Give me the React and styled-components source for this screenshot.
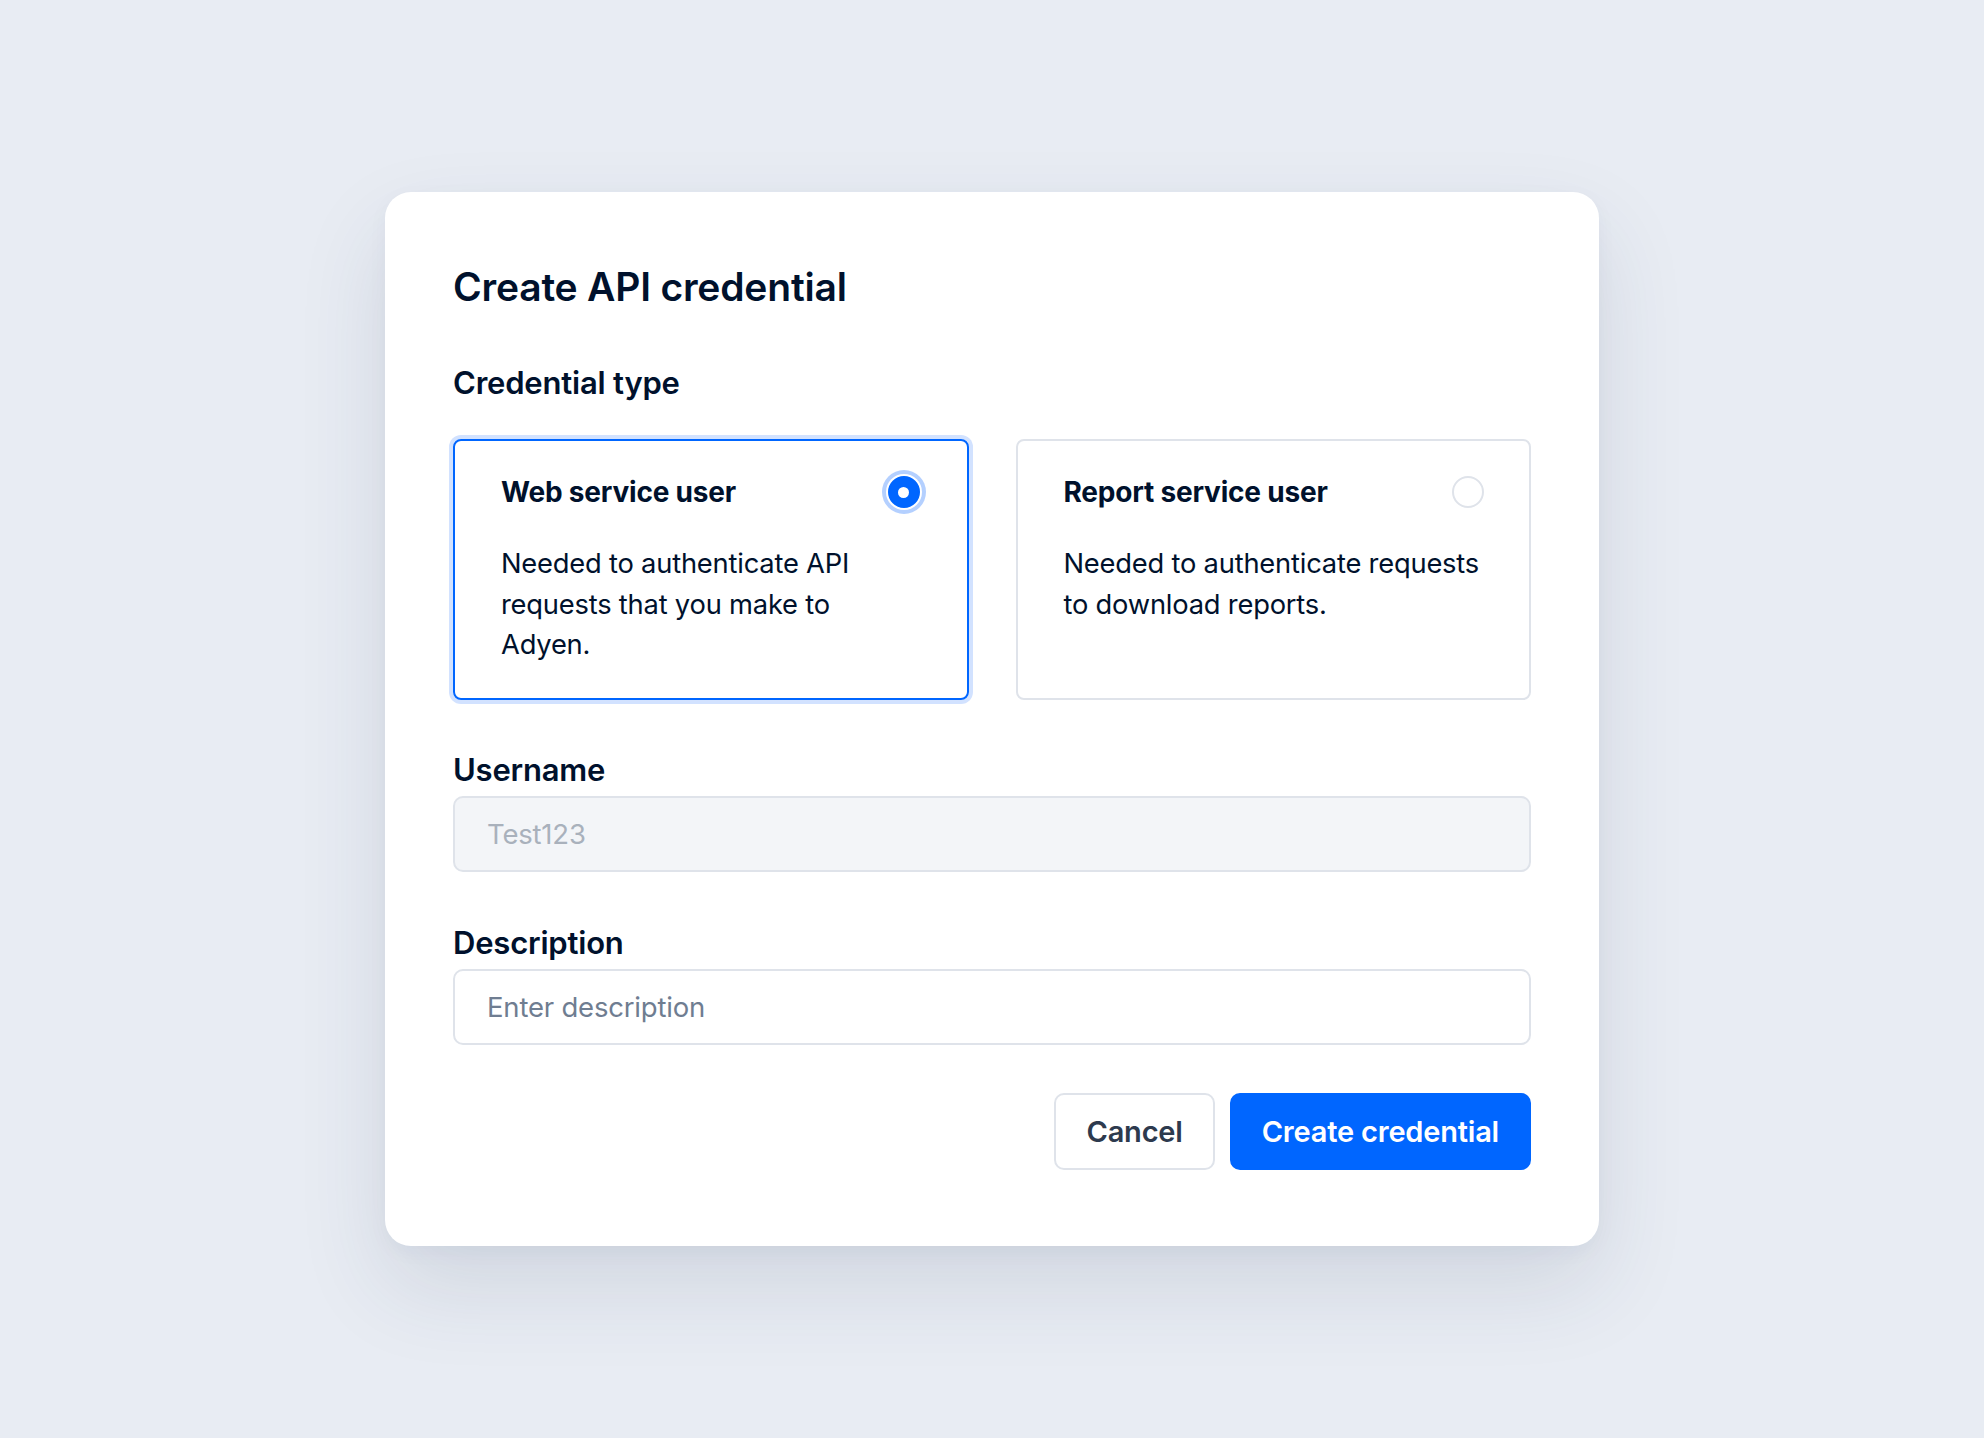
import { useState } from "react"
import styled, { createGlobalStyle } from "styled-components"

const GlobalStyle = createGlobalStyle`
    html, body {
        margin: 0;
        padding: 0;
        background: #e8ecf3;
    }
    body {
        font-family: Inter, "Noto Sans", Roboto, sans-serif;
        color: #00112c;
        -webkit-font-smoothing: antialiased;
    }
    * {
        box-sizing: border-box;
    }
`

const Page = styled.div`
    min-height: 1438px;
    display: flex;
    justify-content: center;
    align-items: flex-start;
    padding-top: 192px;
`

const Modal = styled.div`
    width: 1214px;
    background: #ffffff;
    border-radius: 26px;
    padding: 71px 68px 76px;
    display: flex;
    flex-direction: column;
    box-shadow: 0 40px 90px rgba(38, 56, 94, 0.12), 0 6px 20px rgba(38, 56, 94, 0.04);
`

const Title = styled.h1`
    margin: 0;
    font-size: 39px;
    line-height: 48px;
    font-weight: 600;
    letter-spacing: -0.2px;
    color: #00112c;
`

const SectionLabel = styled.div`
    font-size: 31px;
    line-height: 36px;
    font-weight: 600;
    letter-spacing: -0.2px;
    color: #00112c;
    margin-top: ${p => p.$top || 0}px;
`

const Options = styled.div`
    display: grid;
    grid-template-columns: 1fr 1fr;
    gap: 47px;
    margin-top: 38px;
`

const Option = styled.label`
    display: flex;
    flex-direction: column;
    height: 261px;
    padding: 33px 45px 0 46px;
    border-radius: 8px;
    cursor: pointer;
    border: 2px solid ${p => (p.$active ? "#0066ff" : "#dfe3ea")};
    box-shadow: ${p => (p.$active ? "0 0 0 4px #d2e2ff" : "none")};
`

const OptionHead = styled.div`
    display: flex;
    align-items: center;
    justify-content: space-between;
    height: 36px;
`

const OptionTitle = styled.span`
    font-size: 28px;
    font-weight: 700;
    letter-spacing: -0.2px;
    color: #00112c;
`

const Radio = styled.span`
    width: 32px;
    height: 32px;
    border-radius: 50%;
    display: flex;
    align-items: center;
    justify-content: center;
    margin-right: ${p => (p.$active ? 2 : 0)}px;
    background: ${p => (p.$active ? "#0066ff" : "#ffffff")};
    border: 2px solid ${p => (p.$active ? "#0066ff" : "#dfe3ea")};
    box-shadow: ${p => (p.$active ? "0 0 0 2px #ffffff, 0 0 0 6px #b4d0ff" : "none")};

    &::after {
        content: "";
        width: 11px;
        height: 11px;
        border-radius: 50%;
        background: #ffffff;
        display: ${p => (p.$active ? "block" : "none")};
    }
`

const OptionText = styled.p`
    margin: 34px 0 0;
    font-size: 27.3px;
    line-height: 40.5px;
    font-weight: 400;
    letter-spacing: -0.2px;
    color: #00112c;
    max-width: 418px;
`

const Input = styled.input`
    margin-top: 8px;
    width: 100%;
    height: 76px;
    padding: 0 32px;
    border-radius: 10px;
    border: 2px solid #dfe3ea;
    background: ${p => (p.disabled ? "#f3f5f8" : "#ffffff")};
    font-family: inherit;
    font-size: 27.5px;
    letter-spacing: -0.2px;
    color: #00112c;
    outline: none;

    &::placeholder {
        color: #6f7d91;
    }
    &:disabled {
        color: #a9b1bc;
        -webkit-text-fill-color: #a9b1bc;
    }
`

const Actions = styled.div`
    display: flex;
    justify-content: flex-end;
    gap: 15px;
    margin-top: 48px;
`

const Button = styled.button`
    height: 77px;
    padding: 0 30px;
    border-radius: 10px;
    font-family: inherit;
    font-size: 29px;
    font-weight: 600;
    letter-spacing: -0.2px;
    cursor: pointer;
    border: 2px solid ${p => (p.$primary ? "#0066ff" : "#dfe3ea")};
    background: ${p => (p.$primary ? "#0066ff" : "#ffffff")};
    color: ${p => (p.$primary ? "#ffffff" : "#2d3a4e")};
`

const types = [
    {
        id: "ws",
        title: "Web service user",
        text: "Needed to authenticate API requests that you make to Adyen.",
    },
    {
        id: "report",
        title: "Report service user",
        text: "Needed to authenticate requests to download reports.",
    },
]

export default function App() {
    const [type, setType] = useState("ws")
    const [description, setDescription] = useState("")

    return (
        <>
            <GlobalStyle />
            <Page>
                <Modal>
                    <Title>Create API credential</Title>
                    <SectionLabel $top={54}>Credential type</SectionLabel>
                    <Options>
                        {types.map(t => (
                            <Option key={t.id} $active={type === t.id} onClick={() => setType(t.id)}>
                                <OptionHead>
                                    <OptionTitle>{t.title}</OptionTitle>
                                    <Radio $active={type === t.id} />
                                </OptionHead>
                                <OptionText>{t.text}</OptionText>
                            </Option>
                        ))}
                    </Options>
                    <SectionLabel $top={52}>Username</SectionLabel>
                    <Input value="Test123" disabled readOnly />
                    <SectionLabel $top={53}>Description</SectionLabel>
                    <Input
                        placeholder="Enter description"
                        value={description}
                        onChange={e => setDescription(e.target.value)}
                    />
                    <Actions>
                        <Button>Cancel</Button>
                        <Button $primary>Create credential</Button>
                    </Actions>
                </Modal>
            </Page>
        </>
    )
}
